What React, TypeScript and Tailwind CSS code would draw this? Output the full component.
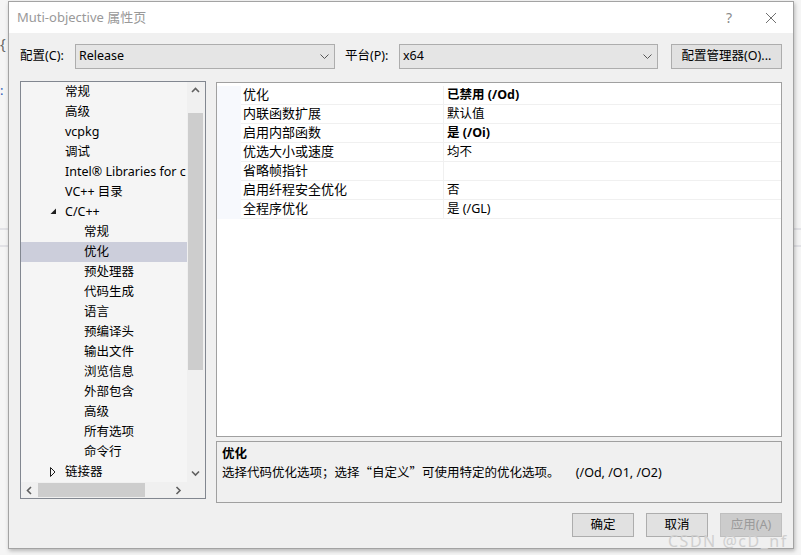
import React from "react";

const FONT = { fontFamily: '"Noto Sans", "Noto Sans CJK SC", sans-serif' };
const CJK = { fontFamily: '"Noto Sans CJK SC", sans-serif' };

type TreeItem = { label: string; level: 1 | 2; mark?: "open" | "closed"; selected?: boolean };

const tree: TreeItem[] = [
  { label: "常规", level: 1 },
  { label: "高级", level: 1 },
  { label: "vcpkg", level: 1 },
  { label: "调试", level: 1 },
  { label: "Intel® Libraries for c", level: 1 },
  { label: "VC++ 目录", level: 1 },
  { label: "C/C++", level: 1, mark: "open" },
  { label: "常规", level: 2 },
  { label: "优化", level: 2, selected: true },
  { label: "预处理器", level: 2 },
  { label: "代码生成", level: 2 },
  { label: "语言", level: 2 },
  { label: "预编译头", level: 2 },
  { label: "输出文件", level: 2 },
  { label: "浏览信息", level: 2 },
  { label: "外部包含", level: 2 },
  { label: "高级", level: 2 },
  { label: "所有选项", level: 2 },
  { label: "命令行", level: 2 },
  { label: "链接器", level: 1, mark: "closed" },
];

const props: { name: string; value: string; bold?: boolean }[] = [
  { name: "优化", value: "已禁用 (/Od)", bold: true },
  { name: "内联函数扩展", value: "默认值" },
  { name: "启用内部函数", value: "是 (/Oi)", bold: true },
  { name: "优选大小或速度", value: "均不" },
  { name: "省略帧指针", value: "" },
  { name: "启用纤程安全优化", value: "否" },
  { name: "全程序优化", value: "是 (/GL)" },
];

function Chevron({ dir }: { dir: "up" | "down" | "left" | "right" }) {
  const d = {
    up: "M1 5 L4.5 1.5 L8 5",
    down: "M1 1.5 L4.5 5 L8 1.5",
    left: "M5 1 L1.5 4.5 L5 8",
    right: "M1.5 1 L5 4.5 L1.5 8",
  }[dir];
  const vertical = dir === "up" || dir === "down";
  return (
    <svg width={vertical ? 9 : 7} height={vertical ? 7 : 9} viewBox={vertical ? "0 0 9 7" : "0 0 7 9"}>
      <path d={d} fill="none" stroke="#606060" strokeWidth="1.6" />
    </svg>
  );
}

function Select({ value, width }: { value: string; width: string }) {
  return (
    <div className={`${width} h-[25px] flex items-center justify-between border border-[#adadad] bg-[#e5e5e5] pl-[3px] pr-[5px]`}>
      <span className="text-[12.5px] text-black">{value}</span>
      <svg width="9" height="6" viewBox="0 0 9 6">
        <path d="M0.5 0.5 L4.5 4.5 L8.5 0.5" fill="none" stroke="#555" strokeWidth="1" />
      </svg>
    </div>
  );
}

function Btn({ label, disabled }: { label: string; disabled?: boolean }) {
  return (
    <div
      className={`w-[62px] h-[24px] flex items-center justify-center border text-[12.5px] ${
        disabled ? "border-[#bfbfbf] bg-[#cccccc] text-[#9a9a9a]" : "border-[#adadad] bg-[#e1e1e1] text-black"
      }`}
    >
      {label}
    </div>
  );
}

export default function App() {
  return (
    <div className="relative w-[801px] h-[555px] overflow-hidden bg-[#f5f5f5]" style={FONT}>
      {/* editor behind the dialog */}
      <div className="absolute left-0 top-[36px] text-[15px] leading-none text-[#666]">{"{"}</div>
      <div className="absolute left-0 top-[84px] text-[13px] leading-none text-[#2a5ab8]">:</div>
      <div className="absolute left-0 right-0 top-[228px] h-[2px] bg-[#e2e2e6]" />
      <div className="absolute left-0 right-0 top-[245px] h-[2px] bg-[#e2e2e6]" />

      {/* dialog */}
      <div className="absolute left-[8px] top-[1px] w-[786px] h-[548px] flex flex-col border border-[#a3a3a3] bg-[#f0f0f0] shadow-[1px_2px_4px_rgba(0,0,0,0.25)]">
        <div className="h-[31px] bg-white flex items-center pl-[8px] pr-[16px]">
          <span className="text-[13px] text-[#999999]">Muti-objective 属性页</span>
          <span className="ml-auto text-[14px] text-[#8a8a8a] mr-[33px]">?</span>
          <svg width="12" height="12" viewBox="0 0 12 12">
            <path d="M1 1 L11 11 M11 1 L1 11" stroke="#707070" strokeWidth="1" />
          </svg>
        </div>

        <div className="flex-1 flex flex-col pl-[11px] pr-[11px] pt-[11px]">
          {/* top row */}
          <div className="h-[25px] flex items-center">
            <span className="w-[55px] text-[12.5px] text-black">配置(C):</span>
            <Select value="Release" width="w-[260px]" />
            <span className="ml-[10px] w-[54px] text-[12.5px] text-black">平台(P):</span>
            <Select value="x64" width="w-[259px]" />
            <div className="ml-auto w-[111px] h-[25px] -mt-[1px] flex items-center justify-center border border-[#adadad] bg-[#e1e1e1] text-[12.5px] text-black">
              配置管理器(O)...
            </div>
          </div>

          {/* main area */}
          <div className="mt-[12px] flex gap-[10px]">
            {/* tree */}
            <div className="w-[186px] h-[418px] border border-[#828790] flex flex-col">
              <div className="flex h-[400px]">
                <div className="w-[166px] bg-[#f5f5f5] overflow-hidden">
                  {tree.map((t, i) => (
                    <div
                      key={i}
                      className={`relative h-[20px] flex items-center whitespace-nowrap text-[12.5px] text-black ${
                        t.selected ? "bg-[#cccedb]" : ""
                      } ${t.level === 1 ? "pl-[44px]" : "pl-[63px]"}`}
                    >
                      {t.mark === "open" && (
                        <svg className="absolute left-[29px] top-[6px]" width="7" height="7" viewBox="0 0 7 7">
                          <path d="M6 0.5 L6 6 L0.5 6 Z" fill="#1e1e1e" />
                        </svg>
                      )}
                      {t.mark === "closed" && (
                        <svg className="absolute left-[29px] top-[5px]" width="6" height="10" viewBox="0 0 6 10">
                          <path d="M0.5 0.5 L5 5 L0.5 9.5 Z" fill="none" stroke="#1e1e1e" strokeWidth="1" />
                        </svg>
                      )}
                      {t.label}
                    </div>
                  ))}
                </div>
                <div className="w-[17px] bg-[#f0f0f0] flex flex-col">
                  <div className="h-[17px] flex items-center justify-center">
                    <Chevron dir="up" />
                  </div>
                  <div className="flex-1 px-[1px] pt-[14px]">
                    <div className="h-[257px] bg-[#cdcdcd]" />
                  </div>
                  <div className="h-[17px] flex items-center justify-center">
                    <Chevron dir="down" />
                  </div>
                </div>
              </div>
              <div className="flex h-[16px] bg-[#f0f0f0]">
                <div className="w-[17px] flex items-center justify-center">
                  <Chevron dir="left" />
                </div>
                <div className="w-[132px] py-[1px]">
                  <div className="w-[107px] h-full bg-[#cdcdcd]" />
                </div>
                <div className="w-[17px] flex items-center justify-center">
                  <Chevron dir="right" />
                </div>
                <div className="flex-1" />
              </div>
            </div>

            {/* right column */}
            <div className="flex-1 flex flex-col pt-[1px]">
              <div className="h-[355px] border border-[#a0a0a0] bg-white pt-[3px]">
                {props.map((p, i) => (
                  <div key={i} className="flex h-[19px]">
                    <div className="w-[24px] bg-[#f7f9fd]" />
                    <div className="w-[202px] border-b border-[#f0f0f0] pl-[2px] flex items-center text-[13px] text-black">
                      {p.name}
                    </div>
                    <div className="w-[1px] bg-[#f0f0f0]" />
                    <div
                      className={`flex-1 border-b border-[#f0f0f0] pl-[3px] flex items-center text-[12.5px] text-black ${
                        p.bold ? "font-bold" : ""
                      }`}
                    >
                      {p.value}
                    </div>
                  </div>
                ))}
              </div>
              <div className="mt-[4px] h-[62px] border border-[#a0a0a0] px-[5px] pt-[3px] flex flex-col">
                <span className="text-[12.5px] font-bold leading-[18px] text-black">优化</span>
                <span className="text-[12.5px] leading-[18px] text-black whitespace-pre">
                  <span style={CJK}>选择代码优化选项；选择“自定义”可使用特定的优化选项。</span>
                  {"     (/Od, /O1, /O2)"}
                </span>
              </div>
            </div>
          </div>

          {/* buttons */}
          <div className="mt-[10px] flex justify-end gap-[12px]">
            <Btn label="确定" />
            <Btn label="取消" />
            <Btn label="应用(A)" disabled />
          </div>
        </div>
      </div>

      {/* watermark */}
      <div className="absolute left-[668px] top-[533px] text-[16px] leading-[16px] tracking-[1.5px] text-[#cfcfcf] whitespace-nowrap">
        CSDN @cD_nf
      </div>
    </div>
  );
}
